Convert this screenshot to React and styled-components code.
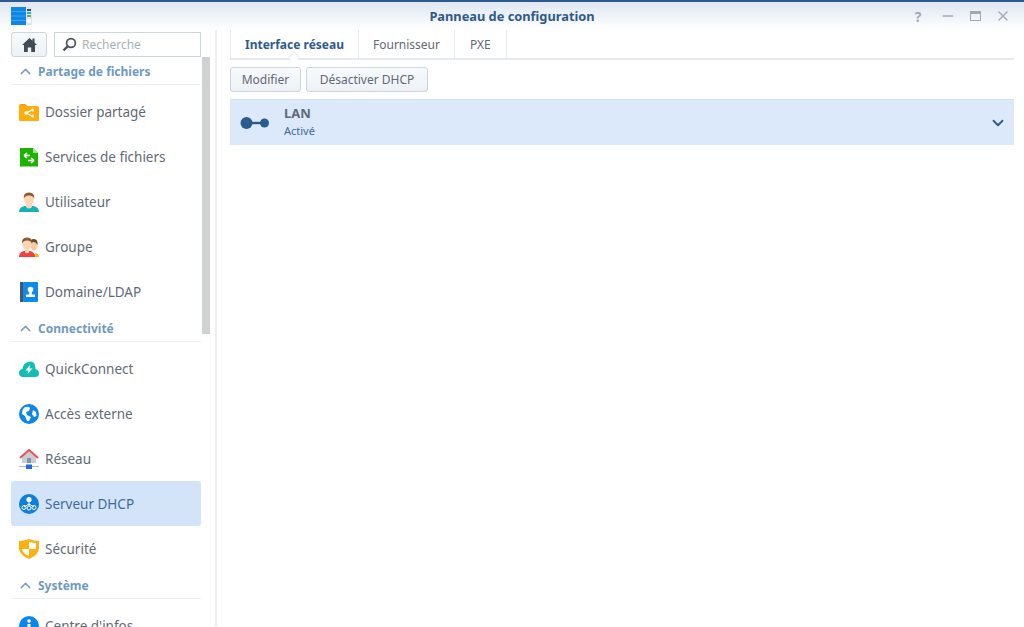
import styled, { createGlobalStyle } from "styled-components";
import { ChevronUp, ChevronDown, Minus, X } from "lucide-react";

const GlobalStyle = createGlobalStyle`
  html, body {
    margin: 0;
    padding: 0;
    height: 100%;
    background: #fff;
    overflow: hidden;
  }
  #root { height: 100%; }
  * { box-sizing: border-box; }
`;

const FolderIcon = () => (
  <svg width="20" height="20" viewBox="0 0 20 20">
    <path d="M0 3.5 Q0 2 1.5 2 H6 L8 4 H18.5 Q20 4 20 5.5 V18 Q20 19 19 19 H1 Q0 19 0 18 Z" fill="#ffad0d" />
    <path d="M2 2 H6 L8 4 H3 Z" fill="#f59c00" />
    <path d="M7 11 L13 8 M7 11 L13 14" stroke="#fff" strokeWidth="1.2" />
    <circle cx="7" cy="11" r="1.7" fill="#fff" />
    <circle cx="13.5" cy="8" r="1.5" fill="#fff" />
    <circle cx="13.5" cy="14" r="1.5" fill="#fff" />
  </svg>
);

const FileServiceIcon = () => (
  <svg width="20" height="20" viewBox="0 0 20 20">
    <path d="M1 1 H14 L19 6 V19.5 H1 Z" fill="#1eb302" />
    <path d="M14 1 L19 6 H14 Z" fill="#a6e39a" />
    <path d="M5 8.5 H11 M5 8.5 L8 6 M5 8.5 L8 11 M15 13.5 H9 M15 13.5 L12 11 M15 13.5 L12 16" stroke="#fff" strokeWidth="1.6" fill="none" />
  </svg>
);

const UserIcon = () => (
  <svg width="20" height="20" viewBox="0 0 20 20">
    <path d="M0 20 Q0 15 6 14 H14 Q20 15 20 20 Z" fill="#12b2b5" />
    <path d="M7 12 H13 V15 Q10 18 7 15 Z" fill="#fbd7b8" />
    <ellipse cx="10" cy="7" rx="5" ry="6.5" fill="#fbd7b8" />
    <path d="M4.8 7 Q4 0.5 10 0.5 Q16 0.5 15.2 7 Q14.5 3.5 10 3.5 Q5.5 3.5 4.8 7 Z" fill="#8a5a32" />
  </svg>
);

const GroupIcon = () => (
  <svg width="20" height="20" viewBox="0 0 20 20">
    <path d="M14 20 Q15 17 17 16 Q20 17 20 20 Z" fill="#fbb117" />
    <ellipse cx="15" cy="8" rx="3.6" ry="5.5" fill="#f7c9a2" />
    <path d="M11 7 Q11 2 15 2 Q19 2 18.6 8 Q17 4.5 14 5 Z" fill="#6b4526" />
    <path d="M0 20 Q0 15 5 14 H11 Q16 15 16 20 Z" fill="#f04040" />
    <ellipse cx="8" cy="7" rx="4.8" ry="6.5" fill="#fbd7b8" />
    <path d="M3 7 Q2 0.5 8 0.5 Q14 0.5 13 7 Q12.5 3.5 8 3.5 Q3.5 3.5 3 7 Z" fill="#8a5a32" />
    <path d="M6 13 H10 V15.5 Q8 17 6 15.5 Z" fill="#fbd7b8" />
  </svg>
);

const DomainIcon = () => (
  <svg width="20" height="20" viewBox="0 0 20 20">
    <rect x="1" y="0" width="3" height="20" fill="#46586e" />
    <rect x="4" y="0" width="15" height="20" rx="1" fill="#0d8bea" />
    <circle cx="11.5" cy="7.5" r="2.8" fill="#fff" />
    <rect x="10.2" y="9" width="2.6" height="4" fill="#fff" />
    <rect x="7" y="12.5" width="9" height="2.5" fill="#fff" />
  </svg>
);

const QuickConnectIcon = () => (
  <svg width="20" height="18" viewBox="0 0 20 18">
    <path d="M4 17 Q0 17 0 13 Q0 9.5 3.5 9 Q4 3.5 9 2 Q14.5 0 16 5 Q16.5 8 16.5 9 Q20 10 20 13.5 Q20 17 16 17 Z" fill="#15bcb4" />
    <path d="M11 5 L6.5 10.5 H9.5 L8.5 14 L13.5 8.5 H10.5 Z" fill="#fff" />
  </svg>
);

const GlobeIcon = () => (
  <svg width="20" height="20" viewBox="0 0 20 20">
    <circle cx="10" cy="10" r="10" fill="#0d86ea" />
    <path d="M6 3 Q10 2 11 4 L10 7 L7 8 L8 11 L12 13 L10 17 L8 17 L6 12 L3 10 Q3 5 6 3 Z" fill="#fff" />
    <path d="M14 6 L17 8 L17.5 12 L15 13 L13 10 Z" fill="#fff" />
  </svg>
);

const HouseIcon = () => (
  <svg width="20" height="20" viewBox="0 0 20 20">
    <path d="M3 8 L10 2 L17 8 V14 H3 Z" fill="#c8ced6" />
    <path d="M1 9 L10 1 L19 9" stroke="#f05050" strokeWidth="2" fill="none" />
    <rect x="8" y="9" width="4" height="5" fill="#8492a2" />
    <rect x="0" y="17" width="20" height="1" fill="#a9b5c2" />
    <rect x="7" y="15.5" width="6" height="4.5" fill="#1d6fd0" />
  </svg>
);

const DhcpIcon = () => (
  <svg width="20" height="20" viewBox="0 0 20 20">
    <circle cx="10" cy="10" r="10" fill="#0d7fe0" />
    <circle cx="10" cy="5.5" r="2.6" fill="#fff" />
    <path d="M10 8 V12 M10 10 L5 13 M10 10 L15 13" stroke="#fff" strokeWidth="1" />
    <circle cx="5" cy="13.5" r="2" fill="none" stroke="#fff" strokeWidth="1" />
    <circle cx="10" cy="14" r="2" fill="none" stroke="#fff" strokeWidth="1" />
    <circle cx="15" cy="13.5" r="2" fill="none" stroke="#fff" strokeWidth="1" />
  </svg>
);

const ShieldIcon = () => (
  <svg width="20" height="20" viewBox="0 0 20 20">
    <path d="M0 2 Q5 2 10 0 Q15 2 20 2 V10 Q19 16 10 20 Q1 16 0 10 Z" fill="#fdb10f" />
    <path d="M10 3 Q14 4 17 4 V10 H10 Z" fill="#fff" />
    <path d="M10 10 V17 Q4 15 3 10 Z" fill="#fff" />
  </svg>
);

const InfoIcon = () => (
  <svg width="20" height="20" viewBox="0 0 20 20">
    <circle cx="10" cy="10" r="10" fill="#0d86ea" />
    <circle cx="10" cy="5" r="1.8" fill="#fff" />
    <rect x="8.5" y="8" width="3" height="8" fill="#fff" />
  </svg>
);

const AppLogo = () => (
  <svg width="21" height="18" viewBox="0 0 21 18">
    <rect x="0" y="0" width="15" height="18" fill="#0f86e6" />
    <path d="M0 4.5 H15 M0 9 H15 M0 13.5 H15" stroke="#3ea3f0" strokeWidth="1" />
    <rect x="15" y="0" width="6" height="18" fill="#dde4ea" />
    <rect x="16" y="2" width="4" height="2" fill="#3d4f60" />
    <rect x="16" y="5" width="4" height="2" fill="#2ea6dc" />
    <rect x="16" y="8" width="4" height="2" fill="#58b947" />
    <circle cx="18" cy="14" r="2.2" fill="#f4f8fb" />
  </svg>
);

const HomeGlyph = () => (
  <svg width="15" height="15" viewBox="0 0 15 15">
    <path d="M7.5 1 L10.5 3.8 V1.5 H12.5 V5.6 L15 8 H13 V15 H9.2 V10.5 H5.8 V15 H2 V8 H0 Z" fill="#414b55" />
  </svg>
);

const SearchGlyph = () => (
  <svg width="15" height="15" viewBox="0 0 15 15">
    <circle cx="9" cy="6" r="4.4" fill="none" stroke="#4a545e" strokeWidth="1.7" />
    <path d="M5.8 9.2 L1.5 13.5" stroke="#4a545e" strokeWidth="2.4" />
  </svg>
);

const LanGlyph = () => (
  <svg width="30" height="14" viewBox="0 0 30 14">
    <circle cx="6.5" cy="7" r="6" fill="#2b5a91" />
    <rect x="10" y="5.8" width="12" height="2.4" fill="#2b5a91" />
    <circle cx="24.5" cy="7" r="4.5" fill="#2b5a91" />
  </svg>
);

const sections = [
  {
    title: "Partage de fichiers",
    items: [
      { label: "Dossier partagé", icon: <FolderIcon /> },
      { label: "Services de fichiers", icon: <FileServiceIcon /> },
      { label: "Utilisateur", icon: <UserIcon /> },
      { label: "Groupe", icon: <GroupIcon /> },
      { label: "Domaine/LDAP", icon: <DomainIcon /> },
    ],
  },
  {
    title: "Connectivité",
    items: [
      { label: "QuickConnect", icon: <QuickConnectIcon /> },
      { label: "Accès externe", icon: <GlobeIcon /> },
      { label: "Réseau", icon: <HouseIcon /> },
      { label: "Serveur DHCP", icon: <DhcpIcon />, active: true },
      { label: "Sécurité", icon: <ShieldIcon /> },
    ],
  },
  {
    title: "Système",
    items: [{ label: "Centre d'infos", icon: <InfoIcon /> }],
  },
];

function App() {
  return (
    <Window>
      <GlobalStyle />
      <TitleBar>
        <LogoBox>
          <AppLogo />
        </LogoBox>
        <Title>Panneau de configuration</Title>
        <WindowControls>
          <HelpMark>?</HelpMark>
          <Minus size={16} strokeWidth={2} />
          <MaxGlyph />
          <X size={16} strokeWidth={2} />
        </WindowControls>
      </TitleBar>
      <Body>
        <Sidebar>
          <SearchRow>
            <HomeButton>
              <HomeGlyph />
            </HomeButton>
            <SearchBox>
              <SearchGlyph />
              <SearchText>Recherche</SearchText>
            </SearchBox>
          </SearchRow>
          <NavList>
            {sections.map((section) => (
              <div key={section.title}>
                <SectionHeader>
                  <ChevronUp size={17} strokeWidth={2} color="#7f9fbd" />
                  <SectionTitle>{section.title}</SectionTitle>
                </SectionHeader>
                {section.items.map((item) => (
                  <NavItem key={item.label} $active={item.active}>
                    <NavIcon>{item.icon}</NavIcon>
                    <NavLabel $active={item.active}>{item.label}</NavLabel>
                  </NavItem>
                ))}
              </div>
            ))}
          </NavList>
          <ScrollThumb />
        </Sidebar>
        <Main>
          <Tabs>
            <Tab $active>Interface réseau</Tab>
            <Tab>Fournisseur</Tab>
            <Tab>PXE</Tab>
          </Tabs>
          <Toolbar>
            <ToolButton $width={71}>Modifier</ToolButton>
            <ToolButton $width={122}>Désactiver DHCP</ToolButton>
          </Toolbar>
          <LanPanel>
            <LanGlyph />
            <LanText>
              <LanName>LAN</LanName>
              <LanStatus>Activé</LanStatus>
            </LanText>
            <ChevronDown size={18} strokeWidth={2.4} color="#2b5a91" />
          </LanPanel>
        </Main>
      </Body>
    </Window>
  );
}

const Window = styled.div`
  width: 1024px;
  height: 627px;
  display: flex;
  flex-direction: column;
  overflow: hidden;
  background: #fff;
  font-family: "Noto Sans", "DejaVu Sans", sans-serif;
  color: #5f6a76;
`;

const TitleBar = styled.div`
  height: 30px;
  flex-shrink: 0;
  display: flex;
  align-items: center;
  border-top: 2px solid #2b5a91;
  background: linear-gradient(#dfe7f1, #ffffff);
`;

const LogoBox = styled.div`
  width: 130px;
  padding-left: 11px;
  display: flex;
`;

const Title = styled.div`
  flex: 1;
  text-align: center;
  font-size: 12.8px;
  font-weight: 700;
  color: #2f5a8c;
`;

const WindowControls = styled.div`
  width: 130px;
  padding-right: 13px;
  display: flex;
  justify-content: flex-end;
  align-items: center;
  gap: 14px;
  color: #a3a9b0;
`;

const HelpMark = styled.span`
  width: 16px;
  text-align: center;
  font-size: 14px;
  font-weight: 700;
`;

const MaxGlyph = styled.span`
  width: 11px;
  height: 10px;
  border: 1.5px solid #a3a9b0;
  border-top-width: 3px;
`;

const Body = styled.div`
  flex: 1;
  display: flex;
  min-height: 0;
`;

const Sidebar = styled.div`
  width: 217px;
  flex-shrink: 0;
  position: relative;
  padding-left: 11px;
  border-right: 2px solid #eceef0;
  overflow: hidden;
`;

const SearchRow = styled.div`
  width: 190px;
  height: 25px;
  margin-top: 2px;
  display: flex;
  gap: 7px;
`;

const HomeButton = styled.div`
  width: 36px;
  display: flex;
  align-items: center;
  justify-content: center;
  border: 1px solid #cbd6e1;
  border-radius: 3px;
  background: linear-gradient(#f8fafc, #edf1f6);
`;

const SearchBox = styled.div`
  flex: 1;
  display: flex;
  align-items: center;
  gap: 5px;
  padding-left: 7px;
  border: 1px solid #cbd6e1;
`;

const SearchText = styled.span`
  font-size: 12px;
  color: #a8afb7;
`;

const NavList = styled.div`
  width: 190px;
`;

const SectionHeader = styled.div`
  height: 28px;
  margin-bottom: 4px;
  padding: 2px 0 0 6px;
  display: flex;
  align-items: center;
  gap: 4px;
  border-bottom: 1px solid #edf0f3;
`;

const SectionTitle = styled.span`
  font-size: 12px;
  font-weight: 700;
  color: #6f9ac0;
`;

const NavItem = styled.div`
  height: 45px;
  display: flex;
  align-items: center;
  padding-left: 8px;
  border-radius: 3px;
  background: ${(p) => (p.$active ? "#d4e4f8" : "transparent")};
`;

const NavIcon = styled.span`
  width: 26px;
  display: flex;
  align-items: center;
  flex-shrink: 0;
`;

const NavLabel = styled.span`
  font-size: 13.5px;
  color: ${(p) => (p.$active ? "#3f6a9e" : "#5f6a76")};
`;

const ScrollThumb = styled.div`
  position: absolute;
  left: 202px;
  top: 27px;
  width: 8px;
  height: 277px;
  background: #cfd1d3;
`;

const Main = styled.div`
  flex: 1;
  padding: 0 10px 0 13px;
  min-width: 0;
`;

const Tabs = styled.div`
  height: 30px;
  display: flex;
  border-bottom: 2px solid #e6e9ec;
`;

const Tab = styled.div`
  position: relative;
  height: 28px;
  padding: 0 14px;
  display: flex;
  align-items: center;
  font-size: 12px;
  font-weight: ${(p) => (p.$active ? 700 : 400)};
  color: ${(p) => (p.$active ? "#2f5a8c" : "#5f6a76")};
  border-right: 1px solid #e6e9ec;
  &:first-child {
    border-left: 1px solid #e6e9ec;
  }
  &:last-child {
    padding: 0 15px;
  }
  ${(p) =>
    p.$active &&
    `&::after {
      content: "";
      position: absolute;
      left: 50%;
      bottom: -3px;
      width: 7px;
      height: 7px;
      margin-left: -4px;
      background: #fff;
      border-left: 1px solid #e6e9ec;
      border-top: 1px solid #e6e9ec;
      transform: rotate(45deg);
    }`}
`;

const Toolbar = styled.div`
  height: 25px;
  margin-top: 7px;
  display: flex;
  gap: 5px;
`;

const ToolButton = styled.div`
  width: ${(p) => p.$width}px;
  display: flex;
  align-items: center;
  justify-content: center;
  font-size: 12px;
  color: #5f6a76;
  border: 1px solid #cbd6e1;
  border-radius: 3px;
  background: linear-gradient(#f8fafc, #edf1f6);
`;

const LanPanel = styled.div`
  height: 46px;
  margin-top: 7px;
  padding: 0 7px 0 10px;
  display: flex;
  align-items: center;
  background: #dce9fa;
  border-top: 1px solid #d3e0ef;
`;

const LanText = styled.div`
  flex: 1;
  margin-left: 14px;
  padding-bottom: 2px;
`;

const LanName = styled.div`
  font-size: 13px;
  font-weight: 700;
  line-height: 16px;
  color: #5f6a76;
`;

const LanStatus = styled.div`
  margin-top: 2px;
  font-size: 11px;
  line-height: 16px;
  color: #3f6a9e;
`;

export default App;
